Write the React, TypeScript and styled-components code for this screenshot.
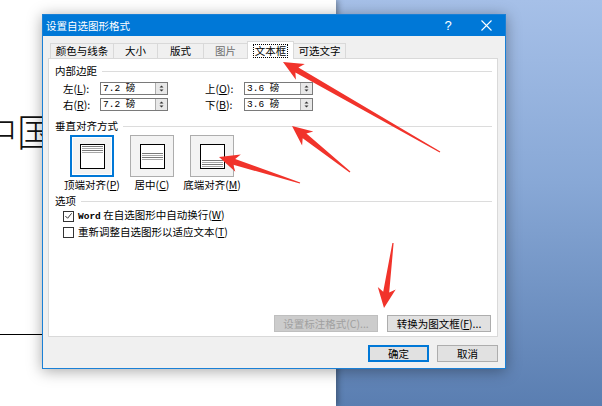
import styled, {createGlobalStyle} from "styled-components";

const GlobalStyle = createGlobalStyle`
    html, body {
        margin: 0;
        padding: 0;
    }
    body {
        font-family: "Noto Sans CJK SC", "Liberation Sans", sans-serif;
        font-size: 10.5px;
        color: #000;
    }
`

const tabs = [
    {title: "颜色与线条", w: 64},
    {title: "大小", w: 45},
    {title: "版式", w: 47},
    {title: "图片", w: 45, dim: true},
    {title: "文本框", w: 47, active: true},
    {title: "可选文字", w: 53},
];

const arrows = [
    [440, 152, 283, 62],
    [350, 172, 292, 126],
    [300, 183, 219, 157],
    [393, 243, 384, 308],
];

// thin tail widening into a notched head, like a screenshot tool arrow
const arrowPoints = (x1: number, y1: number, x2: number, y2: number) => {
    const dx = x2 - x1, dy = y2 - y1;
    const len = Math.hypot(dx, dy);
    const ux = dx / len, uy = dy / len, nx = -uy, ny = ux;
    const p = (d: number, o: number) =>
        `${(x1 + ux * d + nx * o).toFixed(1)},${(y1 + uy * d + ny * o).toFixed(1)}`;
    const h = 20;
    return [p(0, 0.6), p(len - h + 4, 3), p(len - h, 9), p(len, 0), p(len - h, -9), p(len - h + 4, -3), p(0, -0.6)].join(" ");
};

const Spinner = () => (
    <Spin>
        <svg width="11" height="11" viewBox="0 0 11 11">
            <path d="M3.5 4.5 L5.5 2.5 L7.5 4.5 Z" fill="#333"/>
            <path d="M3.5 6.5 L5.5 8.5 L7.5 6.5 Z" fill="#333"/>
        </svg>
    </Spin>
);

const NumberBox = ({value}: { value: string }) => (
    <InputBox>
        <InputText>{value}</InputText>
        <Spinner/>
    </InputBox>
);

const AlignIcon = ({pos}: { pos: "top" | "middle" | "bottom" }) => {
    const start = pos === "top" ? 2 : pos === "middle" ? 9 : 16;
    return (
        <svg width="25" height="25" viewBox="0 0 25 25">
            <rect x="0.5" y="0.5" width="24" height="24" fill="#fff" stroke="#000"/>
            {[0, 2, 4, 6].map(o => (
                <rect key={o} x="2" y={start + o} width="21" height="1" fill={o % 4 === 0 ? "#7a7a7a" : "#a8a8a8"}/>
            ))}
        </svg>
    );
};

const Check = ({checked}: { checked?: boolean }) => (
    <CheckBox>
        {checked && (
            <svg width="10" height="10" viewBox="0 0 10 10">
                <path d="M1.5 5 L4 7.5 L8.5 2" fill="none" stroke="#333" strokeWidth="1.1"/>
            </svg>
        )}
    </CheckBox>
);

export default function App() {
    return (
        <>
            <GlobalStyle/>
            <Desktop>
                <DocPage>
                    <BigText>中国</BigText>
                    <TableRule/>
                </DocPage>

                <Dialog>
                    <TitleBar>
                        <TitleText>设置自选图形格式</TitleText>
                        <TitleButton>?</TitleButton>
                        <TitleButton>
                            <svg width="11" height="11" viewBox="0 0 11 11">
                                <path d="M0.5 0.5 L10.5 10.5 M10.5 0.5 L0.5 10.5" stroke="#fff" strokeWidth="1.1"/>
                            </svg>
                        </TitleButton>
                    </TitleBar>

                    <Body>
                        <TabRow>
                            {tabs.map(t => (
                                <Tab key={t.title} $w={t.w} $active={t.active} $dim={t.dim}>
                                    {t.active ? <Focus>{t.title}</Focus> : t.title}
                                </Tab>
                            ))}
                        </TabRow>

                        <Panel>
                            <GroupHeader $top={6}>内部边距</GroupHeader>
                            <FieldGrid>
                                <FieldLabel>左(<u>L</u>):</FieldLabel>
                                <NumberBox value="7.2 磅"/>
                                <span/>
                                <FieldLabel>上(<u>O</u>):</FieldLabel>
                                <NumberBox value="3.6 磅"/>
                                <FieldLabel>右(<u>R</u>):</FieldLabel>
                                <NumberBox value="7.2 磅"/>
                                <span/>
                                <FieldLabel>下(<u>B</u>):</FieldLabel>
                                <NumberBox value="3.6 磅"/>
                            </FieldGrid>

                            <GroupHeader $top={9}>垂直对齐方式</GroupHeader>
                            <AlignRow>
                                <AlignOption>
                                    <AlignButton $selected><AlignIcon pos="top"/></AlignButton>
                                    <AlignLabel>顶端对齐(<u>P</u>)</AlignLabel>
                                </AlignOption>
                                <AlignOption>
                                    <AlignButton><AlignIcon pos="middle"/></AlignButton>
                                    <AlignLabel>居中(<u>C</u>)</AlignLabel>
                                </AlignOption>
                                <AlignOption>
                                    <AlignButton><AlignIcon pos="bottom"/></AlignButton>
                                    <AlignLabel>底端对齐(<u>M</u>)</AlignLabel>
                                </AlignOption>
                            </AlignRow>

                            <GroupHeader $top={4}>选项</GroupHeader>
                            <Options>
                                <CheckRow>
                                    <Check checked/>
                                    <span><Mono>Word</Mono> 在自选图形中自动换行(<u>W</u>)</span>
                                </CheckRow>
                                <CheckRow>
                                    <Check/>
                                    <span>重新调整自选图形以适应文本(<u>T</u>)</span>
                                </CheckRow>
                            </Options>

                            <PanelButtons>
                                <PushButton $w={104} $disabled>设置标注格式(C)...</PushButton>
                                <PushButton $w={104}>转换为图文框(<u>F</u>)...</PushButton>
                            </PanelButtons>
                        </Panel>

                        <Footer>
                            <PushButton $w={61} $default>确定</PushButton>
                            <PushButton $w={61}>取消</PushButton>
                        </Footer>
                    </Body>
                </Dialog>

                <Arrows width="602" height="406" viewBox="0 0 602 406">
                    {arrows.map(([x1, y1, x2, y2], i) => (
                        <polygon key={i} points={arrowPoints(x1, y1, x2, y2)} fill="#f1332b"/>
                    ))}
                </Arrows>
            </Desktop>
        </>
    );
}

const Desktop = styled.div`
    position: relative;
    width: 602px;
    height: 406px;
    overflow: hidden;
    display: flex;
    background: linear-gradient(180deg, #a6c0e8 0%, #88a8d6 45%, #5a7eb1 100%);
`

const DocPage = styled.div`
    width: 336px;
    height: 406px;
    background: #fff;
    box-shadow: 2px 0 6px rgba(0, 0, 0, 0.35);
    display: flex;
    flex-direction: column;
`

const BigText = styled.div`
    margin: 110px 0 0 -21px;
    font-size: 38px;
    line-height: 40px;
    font-weight: 300;
    color: #111;
    white-space: nowrap;
`

const TableRule = styled.div`
    margin-top: auto;
    margin-bottom: 71px;
    height: 1px;
    background: #000;
`

const Dialog = styled.div`
    position: absolute;
    left: 42px;
    top: 14px;
    width: 464px;
    height: 355px;
    box-sizing: border-box;
    border: 1px solid #1a80d6;
    background: #f0f0f0;
    box-shadow: 0 2px 14px rgba(0, 0, 0, 0.35);
    display: flex;
    flex-direction: column;
`

const TitleBar = styled.div`
    height: 21px;
    flex-shrink: 0;
    background: #0078d7;
    color: #fff;
    display: flex;
    align-items: center;
    padding-left: 3px;
`

const TitleText = styled.span`
    flex: 1;
    line-height: 12px;
`

const TitleButton = styled.div`
    width: 38px;
    height: 21px;
    display: flex;
    align-items: center;
    justify-content: center;
    font-family: "Liberation Sans", sans-serif;
    font-size: 13px;
`

const Body = styled.div`
    flex: 1;
    display: flex;
    flex-direction: column;
    padding: 7px 7px 0 5px;
`

const TabRow = styled.div`
    height: 15px;
    display: flex;
    align-items: flex-end;
    padding-left: 3px;
`

const Tab = styled.div<{ $w: number; $active?: boolean; $dim?: boolean }>`
    width: ${p => p.$w}px;
    height: ${p => (p.$active ? 18 : 15)}px;
    margin-left: -1px;
    margin-bottom: ${p => (p.$active ? -1 : 0)}px;
    box-sizing: border-box;
    border: 1px solid #d9d9d9;
    border-bottom: none;
    background: ${p => (p.$active ? "#fff" : "#f0f0f0")};
    color: ${p => (p.$dim ? "#6d6d6d" : "#000")};
    position: relative;
    z-index: ${p => (p.$active ? 1 : 0)};
    display: flex;
    align-items: center;
    justify-content: center;
    line-height: 12px;
`

const Focus = styled.span`
    outline: 1px dotted #000;
    outline-offset: 0;
    padding: 0 1px;
`

const Panel = styled.div`
    height: 279px;
    box-sizing: border-box;
    background: #fff;
    border: 1px solid #d9d9d9;
    padding: 0 5px 4px 6px;
    display: flex;
    flex-direction: column;
`

const GroupHeader = styled.div<{ $top: number }>`
    margin-top: ${p => p.$top}px;
    height: 12px;
    line-height: 12px;
    display: flex;
    align-items: center;
    gap: 5px;
    white-space: nowrap;

    &::after {
        content: "";
        flex: 1;
        height: 1px;
        background: #dcdcdc;
    }
`

const FieldGrid = styled.div`
    display: grid;
    grid-template-columns: 37px 68px 37px 39px 69px;
    grid-auto-rows: 13px;
    row-gap: 3px;
    margin: 5px 0 0 8px;
`

const FieldLabel = styled.span`
    line-height: 13px;
    white-space: nowrap;
`

const InputBox = styled.div`
    display: flex;
    box-sizing: border-box;
    height: 13px;
    border: 1px solid #7a7a7a;
    background: #fff;
`

const InputText = styled.span`
    flex: 1;
    padding-left: 2px;
    font-family: "Liberation Mono", "Noto Sans CJK SC", monospace;
    font-size: 9.5px;
    line-height: 11px;
    white-space: nowrap;
`

const Spin = styled.div`
    width: 12px;
    box-sizing: border-box;
    border-left: 1px solid #adadad;
    background: #e8e8e8;
    display: flex;
    align-items: center;
    justify-content: center;
`

const AlignRow = styled.div`
    display: flex;
    gap: 16px;
    margin: 3px 0 0 15px;
`

const AlignOption = styled.div`
    width: 44px;
    display: flex;
    flex-direction: column;
    align-items: center;
    gap: 2px;
`

const AlignButton = styled.div<{ $selected?: boolean }>`
    width: 44px;
    height: 42px;
    box-sizing: border-box;
    border: ${p => (p.$selected ? "2px solid #0078d7" : "1px solid #adadad")};
    box-shadow: ${p => (p.$selected ? "inset 0 0 0 1px #fff" : "none")};
    background: #f3f3f3;
    display: flex;
    align-items: center;
    justify-content: center;
`

const AlignLabel = styled.span`
    line-height: 12px;
    white-space: nowrap;
`

const Options = styled.div`
    display: flex;
    flex-direction: column;
    margin: 1px 0 0 8px;
`

const CheckRow = styled.div`
    height: 16px;
    display: flex;
    align-items: center;
    gap: 4px;
    white-space: nowrap;
    line-height: 12px;
`

const CheckBox = styled.div`
    width: 11px;
    height: 11px;
    box-sizing: border-box;
    border: 1px solid #333;
    background: #fff;
    display: flex;
    align-items: center;
    justify-content: center;
`

const Mono = styled.span`
    font-family: "Liberation Mono", monospace;
    font-size: 9.5px;
    font-weight: bold;
`

const PanelButtons = styled.div`
    margin-top: auto;
    display: flex;
    justify-content: flex-end;
    gap: 9px;
    padding-right: 1px;
`

const PushButton = styled.div<{ $w: number; $disabled?: boolean; $default?: boolean }>`
    width: ${p => p.$w}px;
    height: 17px;
    box-sizing: border-box;
    border: 1px solid ${p => (p.$default ? "#0078d7" : p.$disabled ? "#bfbfbf" : "#adadad")};
    box-shadow: ${p => (p.$default ? "inset 0 0 0 1px #0078d7" : "none")};
    background: ${p => (p.$disabled ? "#cccccc" : "#e1e1e1")};
    color: ${p => (p.$disabled ? "#a0a0a0" : "#000")};
    display: flex;
    align-items: center;
    justify-content: center;
    line-height: 12px;
    white-space: nowrap;
`

const Footer = styled.div`
    display: flex;
    justify-content: flex-end;
    gap: 8px;
    padding: 8px 0 0 0;
`

const Arrows = styled.svg`
    position: absolute;
    left: 0;
    top: 0;
    pointer-events: none;
`
